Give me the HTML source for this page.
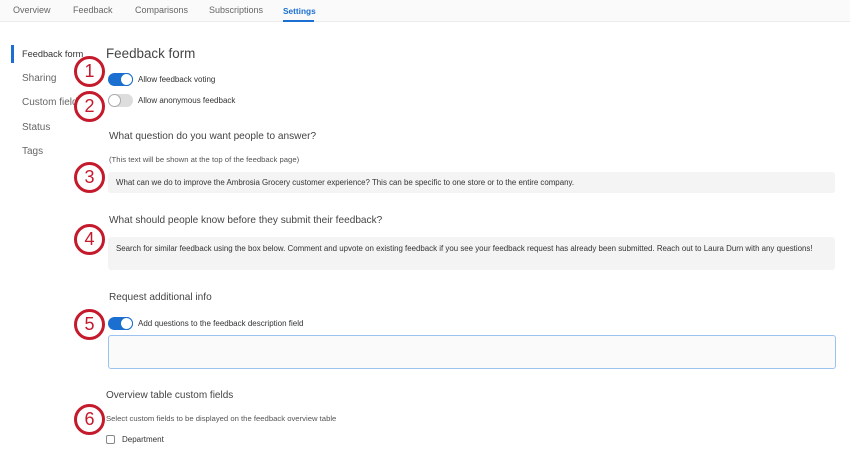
<!DOCTYPE html>
<html><head><style>
*{margin:0;padding:0;box-sizing:border-box}
body{width:850px;height:450px;overflow:hidden;background:#fff;font-family:"Liberation Sans",sans-serif;color:#333;position:relative}
.a{position:absolute;white-space:nowrap}
.tabs{position:absolute;left:0;top:0;width:850px;height:22px;background:#fafafa;border-bottom:1px solid #ececec}
.tab{position:absolute;top:5px;font-size:9px;color:#666}
.side{font-size:10px;color:#666}
.c{position:absolute;width:31px;height:31px;border:3px solid #c41a2b;border-radius:50%;background:#fff;color:#c41a2b;font-size:18px;text-align:center;line-height:25px}
.tg{position:absolute;width:25px;height:13px;border-radius:7px}
.tg.on{background:#1a6fd1}
.tg.off{background:#ddd}
.tg i{position:absolute;top:0;width:13px;height:13px;border-radius:50%;background:#fff}
.tg.on i{right:0;border:1px solid #1a6fd1}
.tg.off i{left:0;border:1px solid #aaa}
.lbl{font-size:8px;color:#333}
.h{font-size:10.1px;color:#444}
.box{position:absolute;background:#f4f4f4;border-radius:3px;font-size:7.9px;color:#333;padding-left:8px}
</style></head><body>
<div class="tabs">
<div class="tab" style="left:13px">Overview</div>
<div class="tab" style="left:73px">Feedback</div>
<div class="tab" style="left:135px">Comparisons</div>
<div class="tab" style="left:209px">Subscriptions</div>
<div class="tab" style="left:283px;color:#1a6fd1;font-weight:bold;font-size:8.3px;top:6px">Settings</div>
<div style="position:absolute;left:283px;top:20px;width:31px;height:2px;background:#1a6fd1"></div>
</div>
<div style="position:absolute;left:11px;top:45px;width:3px;height:18px;background:#1a6fd1"></div>
<div class="a side" style="left:22px;top:49px;color:#333;font-size:9.2px">Feedback form</div>
<div class="a side" style="left:22px;top:73px">Sharing</div>
<div class="a side" style="left:22px;top:97px">Custom fields</div>
<div class="a side" style="left:22px;top:122px">Status</div>
<div class="a side" style="left:22px;top:146px">Tags</div>

<div class="a" style="left:106px;top:46px;font-size:13.4px;color:#444">Feedback form</div>
<div class="tg on" style="left:108px;top:73px"><i></i></div>
<div class="a lbl" style="left:138px;top:75px">Allow feedback voting</div>
<div class="tg off" style="left:108px;top:94px"><i></i></div>
<div class="a lbl" style="left:138px;top:96px">Allow anonymous feedback</div>

<div class="a h" style="left:109px;top:131px">What question do you want people to answer?</div>
<div class="a" style="left:109px;top:155px;font-size:7.7px;color:#555">(This text will be shown at the top of the feedback page)</div>
<div class="box" style="left:108px;top:172px;width:727px;height:21px;line-height:21px">What can we do to improve the Ambrosia Grocery customer experience? This can be specific to one store or to the entire company.</div>

<div class="a h" style="left:109px;top:215px">What should people know before they submit their feedback?</div>
<div class="box" style="left:108px;top:237px;width:727px;height:33px;padding-top:7px">Search for similar feedback using the box below. Comment and upvote on existing feedback if you see your feedback request has already been submitted. Reach out to Laura Durn with any questions!</div>

<div class="a h" style="left:109px;top:292px">Request additional info</div>
<div class="tg on" style="left:108px;top:317px"><i></i></div>
<div class="a lbl" style="left:138px;top:319px">Add questions to the feedback description field</div>
<div style="position:absolute;left:108px;top:335px;width:728px;height:34px;border:1px solid #9cc3ef;border-radius:3px;background:#fafafa"></div>

<div class="a h" style="left:106px;top:390px;font-size:10px">Overview table custom fields</div>
<div class="a" style="left:106px;top:414px;font-size:7.7px;color:#555">Select custom fields to be displayed on the feedback overview table</div>
<div style="position:absolute;left:106px;top:435px;width:9px;height:9px;border:1px solid #888;border-radius:2px"></div>
<div class="a lbl" style="left:122px;top:435px">Department</div>

<div class="c" style="left:74px;top:56px">1</div>
<div class="c" style="left:74px;top:91px">2</div>
<div class="c" style="left:74px;top:162px">3</div>
<div class="c" style="left:74px;top:224px">4</div>
<div class="c" style="left:74px;top:309px">5</div>
<div class="c" style="left:74px;top:404px">6</div>
</body></html>
